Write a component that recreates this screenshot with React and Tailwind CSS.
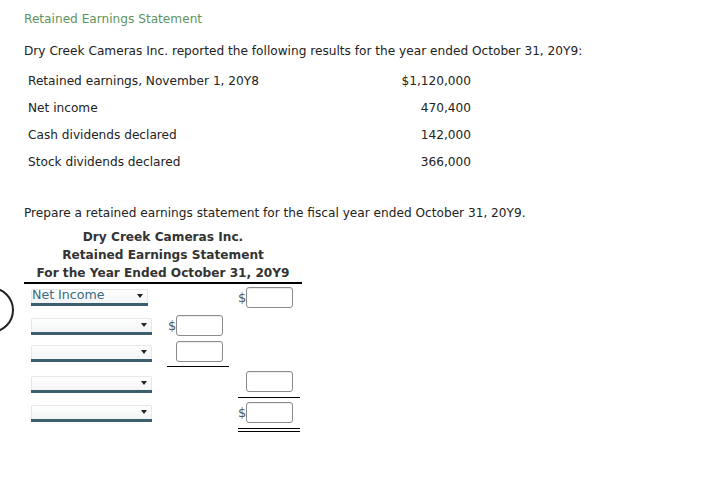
import React from 'react';

const data = [
  ['Retained earnings, November 1, 20Y8', '$1,120,000'],
  ['Net income', '470,400'],
  ['Cash dividends declared', '142,000'],
  ['Stock dividends declared', '366,000'],
];

const Select = ({ value, wide }) => (
  <div className={`relative h-[14px] ${wide ? 'w-[121px]' : 'w-[117px]'} rounded-t-[2px] border border-b-0 border-gray-200 bg-gradient-to-b from-white to-[#f2f4f5]`}>
    <span className="absolute left-[0px] top-[-3px] text-[12.6px] leading-[16px] text-[#3a6a85]">{value}</span>
    <span className="absolute right-[4px] top-[4px] h-0 w-0 border-x-[3px] border-t-[4px] border-x-transparent border-t-[#222]"></span>
    <div className="absolute -bottom-[3px] -left-[1px] -right-[1px] h-[3px] bg-[#3b5f6e]"></div>
  </div>
);

const Box = ({ dollar }) => (
  <div className="flex items-center">
    <span className={`w-[8px] text-[13px] leading-none text-[#555] ${dollar ? '' : 'invisible'}`}>$</span>
    <div className="h-[21px] w-[47px] rounded-[3px] border border-[#8a8a8a] bg-white shadow-[inset_0_1px_1px_rgba(0,0,0,0.08)]"></div>
  </div>
);

export default function App() {
  return (
    <div className="relative min-h-[496px] overflow-hidden bg-white pl-[24px] text-[12.15px] text-[#222]" style={{ fontFamily: '"DejaVu Sans", Verdana, sans-serif' }}>
      <div className="pt-[11px] leading-[16px] text-[#5e9460]">Retained Earnings Statement</div>
      <p className="mt-[16px] leading-[16px]">Dry Creek Cameras Inc. reported the following results for the year ended October 31, 20Y9:</p>

      <table className="mt-[9px] w-[447px]">
        <tbody>
          {data.map(([label, val]) => (
            <tr key={label} className="h-[27px]">
              <td className="pl-[4px]">{label}</td>
              <td className="text-right">{val}</td>
            </tr>
          ))}
        </tbody>
      </table>

      <p className="mt-[29px] leading-[16px]">Prepare a retained earnings statement for the fiscal year ended October 31, 20Y9.</p>

      <div className="mt-[7px] w-[278px]">
        <div className="text-center font-bold leading-[18px] text-[#333]">
          <div>Dry Creek Cameras Inc.</div>
          <div>Retained Earnings Statement</div>
          <div>For the Year Ended October 31, 20Y9</div>
        </div>
        <div className="h-[2px] bg-black"></div>

        {/* row 1 */}
        <div className="grid h-[28px] grid-cols-[143px_62px_73px]">
          <div className="pl-[7px] pt-[5px]"><Select value="Net Income" /></div>
          <div></div>
          <div className="pl-[9px] pt-[3px]"><Box dollar /></div>
        </div>
        {/* row 2 */}
        <div className="grid h-[27px] grid-cols-[143px_62px_73px]">
          <div className="pl-[7px] pt-[6px]"><Select wide /></div>
          <div className="pl-[1px] pt-[3px]"><Box dollar /></div>
          <div></div>
        </div>
        {/* row 3 */}
        <div className="grid h-[28px] grid-cols-[143px_62px_73px]">
          <div className="pl-[7px] pt-[6px]"><Select wide /></div>
          <div className="border-b border-black pl-[1px] pt-[2px]"><Box /></div>
          <div></div>
        </div>
        {/* row 4 */}
        <div className="grid h-[31px] grid-cols-[143px_62px_73px]">
          <div className="pl-[7px] pt-[9px]"><Select wide /></div>
          <div></div>
          <div className="pl-[9px]">
            <div className="h-[31px] w-[62px] border-b border-black pt-[4px]"><Box /></div>
          </div>
        </div>
        {/* row 5 */}
        <div className="grid h-[34px] grid-cols-[143px_62px_73px]">
          <div className="pl-[7px] pt-[7px]"><Select wide /></div>
          <div></div>
          <div className="pl-[9px]">
            <div className="h-[34px] w-[62px] border-b-[4px] border-double border-black pt-[4px]"><Box dollar /></div>
          </div>
        </div>
      </div>

      <div className="absolute left-[-32px] top-[287px] h-[46px] w-[46px] rounded-full border-[2px] border-[#222]"></div>
    </div>
  );
}
